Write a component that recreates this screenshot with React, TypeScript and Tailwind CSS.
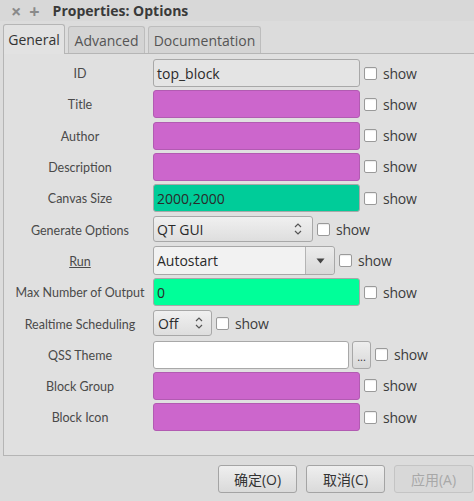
import React from "react";

const font = { fontFamily: '"Open Sans", "Noto Sans CJK SC", sans-serif' };
const labelFont = { fontFamily: 'Lato, "Open Sans", sans-serif' };

function Check() {
  return (
    <span className="flex items-center gap-[6px]">
      <span className="w-[13px] h-[13px] bg-white border border-[#9a9a9a] rounded-[2px] shadow-[inset_0_1px_1px_rgba(0,0,0,0.08)]" />
      <span className="text-[14px] text-[#3c3c3c] tracking-[-0.2px]">show</span>
    </span>
  );
}

function UpDown() {
  return (
    <svg width="8" height="14" viewBox="0 0 8 14" className="text-[#555]">
      <path d="M1 5 L4 2 L7 5" fill="none" stroke="currentColor" strokeWidth="1.2" />
      <path d="M1 9 L4 12 L7 9" fill="none" stroke="currentColor" strokeWidth="1.2" />
    </svg>
  );
}

function Field({ color, text, w = "w-[207px]" }: { color: string; text?: string; w?: string }) {
  return (
    <div className={`${w} h-[28px] rounded-[3px] border border-[#a8a8a8] flex items-center px-[3px] text-[14px] text-[#2a2a2a] ${color}`}>
      {text}
    </div>
  );
}

type Row = { label: string; el: React.ReactNode; underline?: boolean };

export default function App() {
  const magenta = "bg-[#cc66cc] border-[#b25bb2]";
  const rows: Row[] = [
    { label: "ID", el: <><Field color="bg-[#e4e4e4]" text="top_block" /><Check /></> },
    { label: "Title", el: <><Field color={magenta} /><Check /></> },
    { label: "Author", el: <><Field color={magenta} /><Check /></> },
    { label: "Description", el: <><Field color={magenta} /><Check /></> },
    { label: "Canvas Size", el: <><Field color="bg-[#00cc99] border-[#1fae88]" text="2000,2000" /><Check /></> },
    {
      label: "Generate Options",
      el: (
        <>
          <div className="w-[160px] h-[26px] rounded-[3px] border border-[#a8a8a8] bg-gradient-to-b from-[#f0f0f0] to-[#dedede] flex items-center justify-between pl-[3px] pr-[10px] text-[14px] text-[#2a2a2a]">
            <span>QT GUI</span>
            <UpDown />
          </div>
          <Check />
        </>
      ),
    },
    {
      label: "Run",
      underline: true,
      el: (
        <>
          <div className="w-[182px] h-[29px] rounded-[3px] border border-[#a8a8a8] flex text-[14px] text-[#2a2a2a]">
            <div className="flex-1 bg-[#f2f2f2] flex items-center pl-[3px] rounded-l-[3px]">Autostart</div>
            <div className="w-[29px] border-l border-[#b4b4b4] bg-gradient-to-b from-[#ececec] to-[#d8d8d8] flex items-center justify-center rounded-r-[3px]">
              <svg width="9" height="6" viewBox="0 0 9 6"><path d="M0.5 0.5 L8.5 0.5 L4.5 5.5 Z" fill="#444" /></svg>
            </div>
          </div>
          <Check />
        </>
      ),
    },
    { label: "Max Number of Output", el: <><Field color="bg-[#00ff99] border-[#2bd689]" text="0" /><Check /></> },
    {
      label: "Realtime Scheduling",
      el: (
        <>
          <div className="w-[59px] h-[26px] rounded-[3px] border border-[#a8a8a8] bg-gradient-to-b from-[#f0f0f0] to-[#dedede] flex items-center justify-between pl-[4px] pr-[8px] text-[14px] text-[#2a2a2a]">
            <span>Off</span>
            <UpDown />
          </div>
          <Check />
        </>
      ),
    },
    {
      label: "QSS Theme",
      el: (
        <>
          <Field color="bg-white" w="w-[196px]" />
          <div className="w-[19px] h-[28px] -ml-[1px] rounded-[3px] border border-[#a8a8a8] bg-gradient-to-b from-[#eeeeee] to-[#d8d8d8] flex items-end justify-center pb-[6px] text-[11px] leading-none text-[#333]">...</div>
          <Check />
        </>
      ),
    },
    { label: "Block Group", el: <><Field color={magenta} /><Check /></> },
    { label: "Block Icon", el: <><Field color={magenta} /><Check /></> },
  ];

  return (
    <div style={font} className="w-[474px] h-[501px] bg-[#dcdcdc] flex flex-col overflow-hidden">
      {/* title bar */}
      <div className="h-[21px] flex items-center pl-[11px] gap-[8px] bg-[#d8d8d8]">
        <span className="text-[18px] font-bold text-[#8a8a8a] leading-none">×</span>
        <span className="text-[18px] font-bold text-[#8a8a8a] leading-none">+</span>
        <span className="ml-[5px] text-[14px] font-bold text-[#3a3a3a] leading-none">Properties: Options</span>
      </div>
      {/* tabs */}
      <div className="h-[32px] flex items-end pl-[3px] gap-[3px]">
        <div className="relative z-10 w-[62px] h-[30px] -mb-[1px] bg-[#e2e2e2] border border-b-0 border-[#b5b5b5] rounded-t-[3px] flex items-center justify-center text-[14px] text-[#333]">
          General
        </div>
        <div className="w-[77px] h-[27px] bg-[#d4d4d4] border border-b-0 border-[#bdbdbd] rounded-t-[3px] flex items-center justify-center text-[14px] text-[#555]">
          Advanced
        </div>
        <div className="w-[113px] h-[27px] bg-[#d4d4d4] border border-b-0 border-[#bdbdbd] rounded-t-[3px] flex items-center justify-center text-[14px] text-[#555]">
          Documentation
        </div>
      </div>
      {/* panel */}
      <div className="ml-[3px] w-[480px] h-[403px] bg-[#e0e0e0] border border-[#b5b5b5] flex flex-col gap-[3.3px] pt-[5px]">
        {rows.map((r) => (
          <div key={r.label} className="h-[28px] flex items-center">
            <div style={labelFont} className="w-[152px] pt-[3px] text-center text-[12.5px] text-[#4a4a4a]">
              <span className={r.underline ? "underline" : ""}>{r.label}</span>
            </div>
            <div className="-ml-[3px] flex items-center gap-[4px]">{r.el}</div>
          </div>
        ))}
      </div>
      {/* buttons */}
      <div className="flex justify-end gap-[9px] pt-[9px] pr-[1px]">
        {["确定(O)", "取消(C)"].map((t) => (
          <div key={t} className="w-[79px] h-[28px] rounded-[3px] border border-[#a4a4a4] bg-gradient-to-b from-[#efefef] to-[#dadada] flex items-center justify-center text-[14px] text-[#333]">
            {t}
          </div>
        ))}
        <div className="w-[79px] h-[28px] rounded-[3px] border border-[#c4c4c4] bg-[#d8d8d8] flex items-center justify-center text-[14px] text-[#a8a8a8]">
          应用(A)
        </div>
      </div>
    </div>
  );
}
